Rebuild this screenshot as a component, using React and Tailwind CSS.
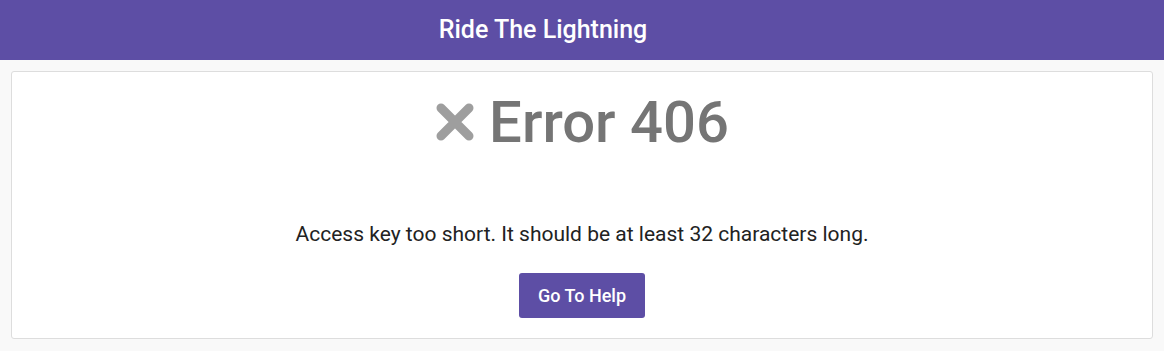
import React from "react";

function CrossIcon() {
  return (
    <svg viewBox="0 0 40 40" className="w-[40px] h-[40px]" aria-hidden="true">
      <path
        d="M6 6 L34 34 M34 6 L6 34"
        stroke="#9e9e9e"
        strokeWidth="9"
        strokeLinecap="round"
        fill="none"
      />
    </svg>
  );
}

export default function App() {
  return (
    <div className="min-h-[351px] bg-[#f9f9f9] font-['Roboto','Liberation_Sans',sans-serif]">
      {/* 헤더 */}
      <header className="h-[60px] bg-[#5d4ea5] flex items-center justify-center pr-[78px]">
        <h1 className="text-white text-[25px] font-medium">Ride The Lightning</h1>
      </header>

      {/* 본문 */}
      <main className="px-[11px] pt-[11px] pb-[12px]">
        <div className="bg-white border border-[#dddddd] rounded-[3px] text-center pt-[15px] pb-[20px]">
          <h2 className="flex items-center justify-center gap-[14px] h-[70px] text-[58px] leading-[70px] text-[#757575] font-medium">
            <CrossIcon />
            <span>Error 406</span>
          </h2>
          <p className="mt-[63px] text-[21px] leading-[28px] text-[#222222]">
            Access key too short. It should be at least 32 characters long.
          </p>
          <div className="mt-[25px] flex justify-center">
            <button className="h-[45px] w-[126px] rounded-[3px] bg-[#5d4ea5] text-white text-[18px] font-medium">
              Go To Help
            </button>
          </div>
        </div>
      </main>
    </div>
  );
}
